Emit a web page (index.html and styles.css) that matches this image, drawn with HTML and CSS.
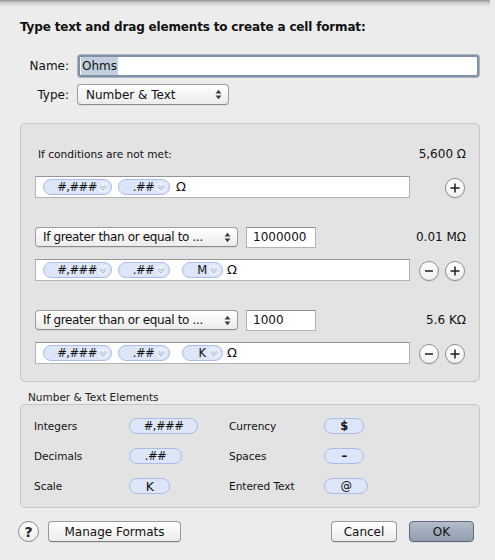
FILE: index.html
```html
<!DOCTYPE html>
<html>
<head>
<meta charset="utf-8">
<title>Cell format</title>
<link rel="stylesheet" href="styles.css">
</head>
<body>
<div class="sheet">
  <h1 class="title">Type text and drag elements to create a cell format:</h1>

  <div class="form">
    <span class="lbl">Name:</span>
    <div class="name-field"><span class="sel">Ohms</span></div>
    <span class="lbl">Type:</span>
    <div class="popup type-popup">
      <span class="popup-text">Number &amp; Text</span>
      <svg class="updown" width="7" height="11" viewBox="0 0 7 11"><path d="M0.6 4.4 L3.5 0.8 L6.4 4.4 Z M0.6 6.6 L3.5 10.2 L6.4 6.6 Z" fill="#3a3a3a"/></svg>
    </div>
  </div>

  <div class="group conds">
    <div class="cond head">
      <span class="small">If conditions are not met:</span>
      <span class="value">5,600 Ω</span>
    </div>
    <div class="fmt">
      <div class="field">
        <span class="tok w-int"><span class="tok-text">#,###</span><svg class="chev" width="12" height="12" viewBox="0 0 12 12"><circle cx="6" cy="6" r="5.5" fill="#e9effa"/><path d="M3 4.8 L6 7.8 L9 4.8" fill="none" stroke="#aab8d0" stroke-width="2.4"/><path d="M3 4.8 L6 7.8 L9 4.8" fill="none" stroke="#ffffff" stroke-width="1"/></svg></span>
        <span class="tok w-dec"><span class="tok-text">.##</span><svg class="chev" width="12" height="12" viewBox="0 0 12 12"><circle cx="6" cy="6" r="5.5" fill="#e9effa"/><path d="M3 4.8 L6 7.8 L9 4.8" fill="none" stroke="#aab8d0" stroke-width="2.4"/><path d="M3 4.8 L6 7.8 L9 4.8" fill="none" stroke="#ffffff" stroke-width="1"/></svg></span>
        <span class="unit">Ω</span>
      </div>
      <div class="btns">
        <span class="circ"><svg width="10" height="10" viewBox="0 0 10 10"><path d="M5 0.5 V9.5 M0.5 5 H9.5" stroke="#1e1e1e" stroke-width="1.5"/></svg></span>
      </div>
    </div>

    <div class="cond">
      <div class="popup cond-popup">
        <span class="popup-text">If greater than or equal to ...</span>
        <svg class="updown" width="7" height="11" viewBox="0 0 7 11"><path d="M0.6 4.4 L3.5 0.8 L6.4 4.4 Z M0.6 6.6 L3.5 10.2 L6.4 6.6 Z" fill="#3a3a3a"/></svg>
      </div>
      <div class="num">1000000</div>
      <span class="value">0.01 MΩ</span>
    </div>
    <div class="fmt">
      <div class="field">
        <span class="tok w-int"><span class="tok-text">#,###</span><svg class="chev" width="12" height="12" viewBox="0 0 12 12"><circle cx="6" cy="6" r="5.5" fill="#e9effa"/><path d="M3 4.8 L6 7.8 L9 4.8" fill="none" stroke="#aab8d0" stroke-width="2.4"/><path d="M3 4.8 L6 7.8 L9 4.8" fill="none" stroke="#ffffff" stroke-width="1"/></svg></span>
        <span class="tok w-dec"><span class="tok-text">.##</span><svg class="chev" width="12" height="12" viewBox="0 0 12 12"><circle cx="6" cy="6" r="5.5" fill="#e9effa"/><path d="M3 4.8 L6 7.8 L9 4.8" fill="none" stroke="#aab8d0" stroke-width="2.4"/><path d="M3 4.8 L6 7.8 L9 4.8" fill="none" stroke="#ffffff" stroke-width="1"/></svg></span>
        <span class="tok w-scale"><span class="tok-text">M</span><svg class="chev" width="12" height="12" viewBox="0 0 12 12"><circle cx="6" cy="6" r="5.5" fill="#e9effa"/><path d="M3 4.8 L6 7.8 L9 4.8" fill="none" stroke="#aab8d0" stroke-width="2.4"/><path d="M3 4.8 L6 7.8 L9 4.8" fill="none" stroke="#ffffff" stroke-width="1"/></svg></span>
        <span class="unit">Ω</span>
      </div>
      <div class="btns">
        <span class="circ"><svg width="10" height="10" viewBox="0 0 10 10"><path d="M1 5 H9" stroke="#1e1e1e" stroke-width="1.5"/></svg></span>
        <span class="circ"><svg width="10" height="10" viewBox="0 0 10 10"><path d="M5 0.5 V9.5 M0.5 5 H9.5" stroke="#1e1e1e" stroke-width="1.5"/></svg></span>
      </div>
    </div>

    <div class="cond">
      <div class="popup cond-popup">
        <span class="popup-text">If greater than or equal to ...</span>
        <svg class="updown" width="7" height="11" viewBox="0 0 7 11"><path d="M0.6 4.4 L3.5 0.8 L6.4 4.4 Z M0.6 6.6 L3.5 10.2 L6.4 6.6 Z" fill="#3a3a3a"/></svg>
      </div>
      <div class="num">1000</div>
      <span class="value">5.6 KΩ</span>
    </div>
    <div class="fmt">
      <div class="field">
        <span class="tok w-int"><span class="tok-text">#,###</span><svg class="chev" width="12" height="12" viewBox="0 0 12 12"><circle cx="6" cy="6" r="5.5" fill="#e9effa"/><path d="M3 4.8 L6 7.8 L9 4.8" fill="none" stroke="#aab8d0" stroke-width="2.4"/><path d="M3 4.8 L6 7.8 L9 4.8" fill="none" stroke="#ffffff" stroke-width="1"/></svg></span>
        <span class="tok w-dec"><span class="tok-text">.##</span><svg class="chev" width="12" height="12" viewBox="0 0 12 12"><circle cx="6" cy="6" r="5.5" fill="#e9effa"/><path d="M3 4.8 L6 7.8 L9 4.8" fill="none" stroke="#aab8d0" stroke-width="2.4"/><path d="M3 4.8 L6 7.8 L9 4.8" fill="none" stroke="#ffffff" stroke-width="1"/></svg></span>
        <span class="tok w-scale"><span class="tok-text">K</span><svg class="chev" width="12" height="12" viewBox="0 0 12 12"><circle cx="6" cy="6" r="5.5" fill="#e9effa"/><path d="M3 4.8 L6 7.8 L9 4.8" fill="none" stroke="#aab8d0" stroke-width="2.4"/><path d="M3 4.8 L6 7.8 L9 4.8" fill="none" stroke="#ffffff" stroke-width="1"/></svg></span>
        <span class="unit">Ω</span>
      </div>
      <div class="btns">
        <span class="circ"><svg width="10" height="10" viewBox="0 0 10 10"><path d="M1 5 H9" stroke="#1e1e1e" stroke-width="1.5"/></svg></span>
        <span class="circ"><svg width="10" height="10" viewBox="0 0 10 10"><path d="M5 0.5 V9.5 M0.5 5 H9.5" stroke="#1e1e1e" stroke-width="1.5"/></svg></span>
      </div>
    </div>
  </div>

  <div class="group-label">Number &amp; Text Elements</div>
  <div class="group elements">
    <span class="el-lbl">Integers</span><span class="etok e-int">#,###</span>
    <span class="el-lbl">Currency</span><span class="etok e-cur">$</span>
    <span class="el-lbl">Decimals</span><span class="etok e-dec">.##</span>
    <span class="el-lbl">Spaces</span><span class="etok e-cur">–</span>
    <span class="el-lbl">Scale</span><span class="etok e-scale">K</span>
    <span class="el-lbl">Entered Text</span><span class="etok e-at">@</span>
  </div>

  <div class="footer">
    <span class="help">?</span>
    <span class="btn manage">Manage Formats</span>
    <span class="spacer"></span>
    <span class="btn cancel">Cancel</span>
    <span class="btn ok">OK</span>
  </div>
</div>
</body>
</html>
```

FILE: styles.css
```css
html, body {
  margin: 0;
  padding: 0;
}
body {
  width: 495px;
  height: 560px;
  overflow: hidden;
  background: linear-gradient(to bottom, #8f8f8f 0px, #c4c4c4 2px, #e2e2e2 5px, #ececec 8px) no-repeat 0 0 / 490px 8px, #ececec;
  font-family: "DejaVu Sans", "Noto Sans", sans-serif;
  font-size: 12px;
  color: #111;
}
.sheet {
  display: flex;
  flex-direction: column;
}
.title {
  margin: 0;
  padding: 19px 0 0 20px;
  font-size: 12px;
  font-weight: bold;
  line-height: 16px;
  letter-spacing: -0.17px;
  color: #111;
}
.form {
  display: grid;
  grid-template-columns: 49px 1fr;
  column-gap: 8px;
  row-gap: 7px;
  align-items: center;
  margin: 20px 16px 0 20px;
}
.lbl {
  text-align: right;
  font-size: 12px;
  line-height: 16px;
}
.name-field {
  height: 22px;
  box-sizing: border-box;
  margin-left: 1px;
  border: 2px solid #8091a6;
  border-radius: 3px;
  box-shadow: 0 0 0 1px #aab5c3;
  background: #fff;
  display: flex;
  align-items: center;
  padding-left: 1px;
}
.sel {
  background: #c2cfdf;
  line-height: 18px;
  padding: 0 1px;
  font-size: 12px;
}
.popup {
  height: 21px;
  box-sizing: border-box;
  border: 1px solid #9d9d9d;
  border-bottom-color: #8a8a8a;
  border-radius: 4px;
  background: linear-gradient(to bottom, #ffffff, #f3f3f3 60%, #ececec);
  box-shadow: 0 1px 0 rgba(0,0,0,0.06);
  display: flex;
  align-items: center;
  justify-content: space-between;
  padding: 0 6px 0 8px;
}
.type-popup {
  width: 152px;
}
.popup-text {
  font-size: 12px;
  line-height: 16px;
  white-space: nowrap;
}
.cond-popup {
  width: 203px;
  height: 20px;
  padding-left: 7px;
}
.cond-popup .popup-text {
  letter-spacing: -0.36px;
}
.group {
  background: #e3e3e3;
  border: 1px solid #c6c6c6;
  border-radius: 5px;
  box-sizing: border-box;
}
.conds {
  margin: 18px 15px 0 20px;
  padding: 20px 14px 17px 14px;
  display: flex;
  flex-direction: column;
}
.cond {
  display: flex;
  align-items: center;
  height: 20px;
  margin-top: 29px;
}
.cond.head {
  margin-top: 0;
}
.small {
  font-size: 10.6px;
  line-height: 14px;
  padding-left: 3px;
}
.value {
  margin-left: auto;
  font-size: 12px;
  line-height: 16px;
  margin-right: -1px;
}
.num {
  width: 70px;
  height: 21px;
  box-sizing: border-box;
  margin-left: 8px;
  background: #fff;
  border: 1px solid #b3b3b3;
  border-top-color: #8e8e8e;
  display: flex;
  align-items: center;
  padding-left: 6px;
  font-size: 12px;
}
.fmt {
  display: flex;
  align-items: center;
  height: 22px;
  margin-top: 12px;
}
.field {
  width: 375px;
  height: 22px;
  box-sizing: border-box;
  background: #fff;
  border: 1px solid #b3b3b3;
  border-top-color: #959595;
  display: flex;
  align-items: center;
  padding-left: 7px;
}
.tok {
  height: 16px;
  box-sizing: border-box;
  border: 1px solid #a9bde6;
  border-radius: 8px;
  background: #dce6f8;
  display: flex;
  align-items: center;
  padding: 0 2px 0 13px;
  margin-right: 6px;
}
.tok-text {
  flex: 1;
  text-align: center;
  font-size: 11.5px;
  letter-spacing: -0.5px;
  line-height: 14px;
}
.chev {
  display: block;
  flex: none;
}
.w-int { width: 69px; }
.w-dec { width: 52px; }
.w-scale { width: 41px; margin-left: 6px; margin-right: 4px; }
.unit {
  font-size: 13px;
  line-height: 16px;
}
.btns {
  margin-left: auto;
  display: flex;
  gap: 6px;
  padding-top: 2px;
}
.circ {
  width: 20px;
  height: 20px;
  box-sizing: border-box;
  border-radius: 50%;
  border: 1px solid #8e8e8e;
  background: linear-gradient(to bottom, #ffffff, #efefef);
  box-shadow: 0 1px 0 rgba(0,0,0,0.08);
  display: flex;
  align-items: center;
  justify-content: center;
}
.group-label {
  margin: 8px 0 0 28px;
  font-size: 10.5px;
  line-height: 14px;
  color: #222;
}
.elements {
  margin: 0 15px 0 20px;
  padding: 13px;
  display: grid;
  grid-template-columns: 95px 100px 95px 1fr;
  grid-auto-rows: 16px;
  row-gap: 14px;
  align-items: center;
  justify-items: start;
}
.el-lbl {
  font-size: 10.5px;
  line-height: 14px;
}
.etok {
  height: 16px;
  box-sizing: border-box;
  border: 1px solid #a9bde6;
  border-radius: 8px;
  background: #dce6f8;
  display: flex;
  align-items: center;
  justify-content: center;
  font-size: 11.5px;
  letter-spacing: -0.5px;
}
.e-int { width: 69px; }
.e-dec { width: 53px; }
.e-scale { width: 41px; font-size: 12.5px; }
.e-cur { width: 40px; font-weight: bold; }
.e-at { width: 44px; }
.footer {
  display: flex;
  align-items: center;
  margin-top: 13px;
  padding: 0 21px 0 18px;
}
.help {
  width: 21px;
  height: 21px;
  box-sizing: border-box;
  border-radius: 50%;
  border: 1px solid #858585;
  background: linear-gradient(to bottom, #ffffff, #ededed);
  display: flex;
  align-items: center;
  justify-content: center;
  font-size: 14px;
  font-weight: bold;
  color: #222;
  margin-right: 9px;
}
.btn {
  height: 21px;
  box-sizing: border-box;
  border: 1px solid #979797;
  border-bottom-color: #808080;
  border-radius: 4px;
  background: linear-gradient(to bottom, #ffffff, #f4f4f4 55%, #ebebeb);
  box-shadow: 0 1px 0 rgba(0,0,0,0.07);
  display: flex;
  align-items: center;
  justify-content: center;
  font-size: 12px;
  color: #111;
}
.manage { width: 133px; }
.spacer { flex: 1; }
.cancel { width: 66px; margin-right: 12px; }
.ok {
  width: 65px;
  border-color: #5f6a7a;
  background: linear-gradient(to bottom, #b3bdca, #a1acbb 50%, #929eb0);
}
```
